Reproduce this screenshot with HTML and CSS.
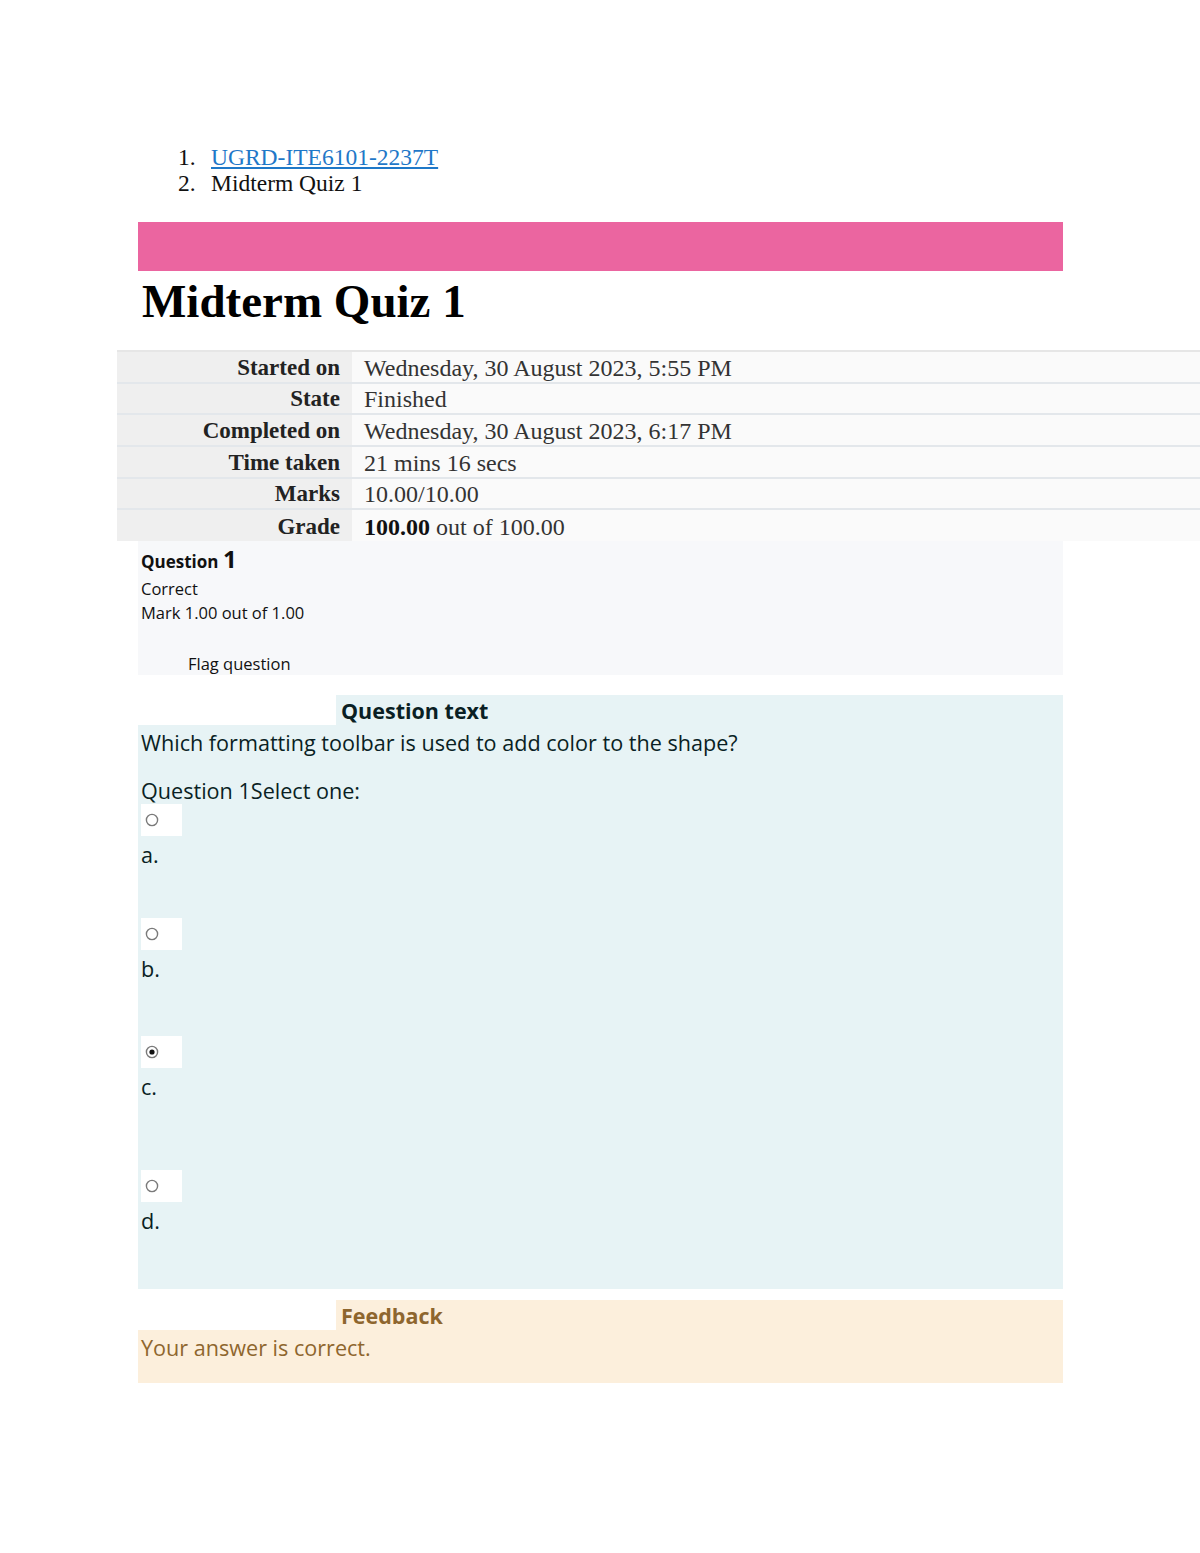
FILE: index.html
```html
<!DOCTYPE html>
<html lang="en">
<head>
<meta charset="utf-8">
<title>Midterm Quiz 1</title>
<link rel="stylesheet" href="styles.css">
</head>
<body>
<div class="page">
  <ol class="crumbs">
    <li><a href="#">UGRD-ITE6101-2237T</a></li>
    <li>Midterm Quiz 1</li>
  </ol>
  <div class="banner"></div>
  <h1 class="title">Midterm Quiz 1</h1>
  <table class="summary">
    <tr><th>Started on</th><td>Wednesday, 30 August 2023, 5:55 PM</td></tr>
    <tr><th>State</th><td>Finished</td></tr>
    <tr><th>Completed on</th><td>Wednesday, 30 August 2023, 6:17 PM</td></tr>
    <tr><th>Time taken</th><td>21 mins 16 secs</td></tr>
    <tr><th>Marks</th><td>10.00/10.00</td></tr>
    <tr><th>Grade</th><td><b>100.00</b> out of 100.00</td></tr>
  </table>
  <div class="qinfo">
    <div class="qno">Question <span class="qnum">1</span></div>
    <div class="qline">Correct</div>
    <div class="qline">Mark 1.00 out of 1.00</div>
    <div class="flag">Flag question</div>
  </div>
  <div class="qtext-head"><span>Question text</span></div>
  <div class="qtext">
    <p class="prompt">Which formatting toolbar is used to add color to the shape?</p>
    <p class="select">Question 1Select one:</p>
    <div class="opt opt-a">
      <span class="radio"><svg width="14" height="14" viewBox="0 0 14 14"><circle cx="7" cy="7" r="5.6" fill="#fff" stroke="#7a7a7a" stroke-width="1.4"/></svg></span>
      <div class="optlabel">a.</div>
    </div>
    <div class="opt opt-b">
      <span class="radio"><svg width="14" height="14" viewBox="0 0 14 14"><circle cx="7" cy="7" r="5.6" fill="#fff" stroke="#7a7a7a" stroke-width="1.4"/></svg></span>
      <div class="optlabel">b.</div>
    </div>
    <div class="opt opt-c">
      <span class="radio"><svg width="14" height="14" viewBox="0 0 14 14"><circle cx="7" cy="7" r="5.6" fill="#fff" stroke="#7a7a7a" stroke-width="1.4"/><circle cx="7" cy="7" r="2.6" fill="#111"/></svg></span>
      <div class="optlabel">c.</div>
    </div>
    <div class="opt opt-d">
      <span class="radio"><svg width="14" height="14" viewBox="0 0 14 14"><circle cx="7" cy="7" r="5.6" fill="#fff" stroke="#7a7a7a" stroke-width="1.4"/></svg></span>
      <div class="optlabel">d.</div>
    </div>
  </div>
  <div class="fb-head"><span>Feedback</span></div>
  <div class="fb">Your answer is correct.</div>
</div>
</body>
</html>
```
FILE: styles.css
```css
html, body {
  margin: 0;
  padding: 0;
  background: #fff;
  overflow-x: hidden;
}
.page {
  width: 925px;
  margin-left: 138px;
  padding-top: 144px;
  font-family: "Liberation Serif", "Times New Roman", serif;
  color: #111;
}
.crumbs {
  margin: 0;
  padding-left: 40px;
  list-style: none;
  counter-reset: crumb;
  font-size: 23.5px;
  line-height: 26px;
}
.crumbs li {
  counter-increment: crumb;
  display: flex;
}
.crumbs li::before {
  content: counter(crumb) ".";
  width: 33px;
  flex: none;
}
.crumbs a {
  color: #1f78c8;
  text-decoration: underline;
}
.banner {
  height: 49px;
  margin-top: 26px;
  background: #eb65a0;
}
.title {
  margin: 0 0 0 4px;
  font-size: 47px;
  line-height: 60px;
  font-weight: bold;
  color: #000;
}
.summary {
  margin-top: 19px;
  margin-left: -21px;
  width: 1083px;
  border-collapse: collapse;
  font-size: 24px;
  border-top: 2px solid #e6e6e6;
}
.summary th, .summary td {
  height: 27.67px;
  padding: 2px 12px 0;
  border-bottom: 2px solid #e3e7eb;
  line-height: 26px;
}
.summary tr:last-child th, .summary tr:last-child td {
  border-bottom: none;
  height: 28.67px;
}
.summary th {
  width: 211px;
  text-align: right;
  background: #efefef;
  font-weight: bold;
  font-size: 23px;
  color: #222;
}
.summary td {
  text-align: left;
  background: #fafafa;
  color: #333;
}
.summary td b {
  color: #111;
}
.qinfo {
  background: #f7f8fa;
  height: 134px;
  padding: 3px 3px 0;
  box-sizing: border-box;
  font-family: "Open Sans", "Noto Sans", sans-serif;
  color: #111;
}
.qno {
  font-size: 17px;
  font-weight: bold;
  line-height: 30px;
}
.qnum {
  font-size: 24px;
}
.qline {
  font-size: 16.5px;
  line-height: 24px;
  font-weight: 500;
}
.flag {
  margin-top: 27px;
  padding-left: 47px;
  font-size: 16.5px;
  line-height: 24px;
  font-weight: 500;
}
.qtext-head, .fb-head {
  margin-top: 20px;
  margin-left: 198px;
  height: 30px;
  background: #e7f3f5;
  font-family: "Open Sans", "Noto Sans", sans-serif;
  font-size: 21.5px;
  font-weight: bold;
  line-height: 32px;
  padding-left: 5px;
  color: #0a1f24;
}
.qtext {
  background: #e7f3f5;
  height: 564px;
  padding: 4px 3px 0;
  box-sizing: border-box;
  font-family: "Open Sans", "Noto Sans", sans-serif;
  font-size: 21.6px;
  color: #0a1f24;
}
.prompt {
  margin: 0;
  line-height: 28px;
}
.select {
  margin: 21px 0 0;
  line-height: 26px;
}
.opt {
  box-sizing: border-box;
}
.opt-a { height: 114px; }
.opt-b { height: 118px; }
.opt-c { height: 134px; }
.opt-d { height: 118px; }
.radio {
  display: flex;
  align-items: center;
  width: 41px;
  height: 32px;
  padding-left: 4px;
  box-sizing: border-box;
  background: #fff;
}
.radio svg {
  display: block;
}
.optlabel {
  margin-top: 5px;
  line-height: 28px;
}
.fb-head {
  margin-top: 11px;
  background: #fcefdc;
  color: #8e662e;
}
.fb {
  height: 53px;
  background: #fcefdc;
  padding: 4px 3px 0;
  box-sizing: border-box;
  font-family: "Open Sans", "Noto Sans", sans-serif;
  font-size: 21.6px;
  line-height: 28px;
  color: #8e662e;
}
```
